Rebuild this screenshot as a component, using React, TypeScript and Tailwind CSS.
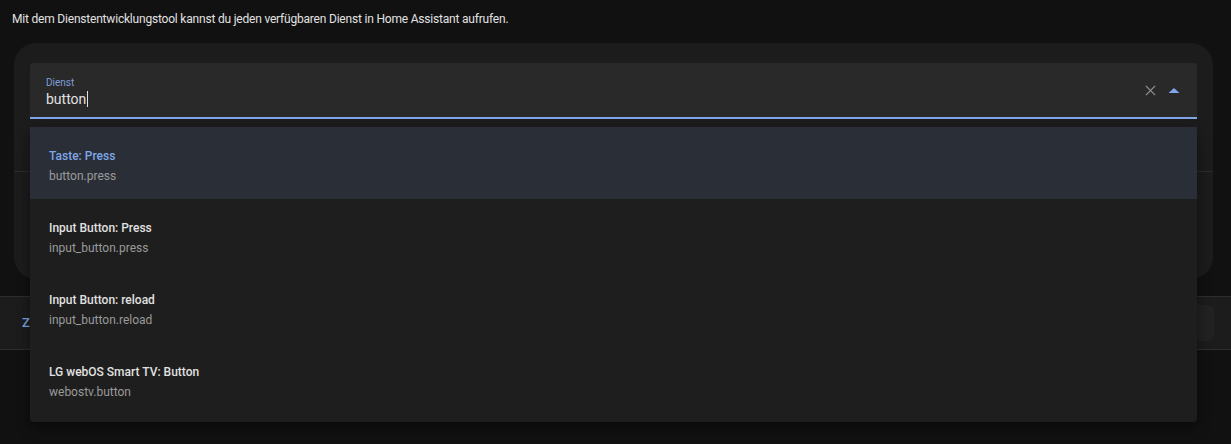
import { X } from "lucide-react";

const items = [
  { title: "Taste: Press", id: "button.press", active: true },
  { title: "Input Button: Press", id: "input_button.press" },
  { title: "Input Button: reload", id: "input_button.reload" },
  { title: "LG webOS Smart TV: Button", id: "webostv.button" },
];

const App = () => {
  return (
    <div
      className="w-[1231px] h-[444px] overflow-hidden bg-[#111111] text-[#e1e1e1]"
      style={{ fontFamily: "Roboto, 'Noto Sans', sans-serif" }}
    >
      <p className="pl-[12px] pt-[11px] h-[43px] text-[12px] leading-[16px] tracking-[-0.2px]">
        Mit dem Dienstentwicklungstool kannst du jeden verfügbaren Dienst in Home Assistant aufrufen.
      </p>

      <div className="ml-[14px] w-[1199px] h-[236px] rounded-[22px] bg-[#1c1c1c] pt-[20px]">
        <div className="relative mx-[16px]">
          <div className="h-[56px] rounded-t-[4px] bg-[#292929] border-b-2 border-[#7ea6e8] flex items-center pl-[16px] pr-[17px]">
            <div className="flex-1 flex flex-col pt-[5px]">
              <span className="text-[10px] leading-[12px] text-[#7c9fdc]">Dienst</span>
              <span className="text-[14px] leading-[20px] text-[#e1e1e1] flex items-center">
                button
                <span className="inline-block w-px h-[16px] bg-[#e1e1e1] ml-px" />
              </span>
            </div>
            <X className="w-[17px] h-[17px] text-[#8e8e8e] mr-[7px] mt-[1px]" strokeWidth={1.6} />
            <svg width="12" height="12" viewBox="0 0 12 12" className="ml-[2px] mt-[1px]">
              <path d="M0.5 8 L6 3 L11.5 8 Z" fill="#7ea6e8" />
            </svg>
          </div>

          <div className="absolute left-0 right-0 top-[64px] z-10 bg-[#1e1e1e] rounded-b-[4px] pb-[7px] shadow-[0_6px_14px_rgba(0,0,0,0.45)]">
            {items.map((it) => (
              <div
                key={it.id}
                className={`h-[72px] pl-[19px] pt-[6px] flex flex-col justify-center gap-[4px] ${it.active ? "bg-[#2a2e37]" : ""}`}
              >
                <span
                  className={`text-[12px] leading-[16px] font-medium ${it.active ? "text-[#7ea6e8]" : "text-[#e1e1e1]"}`}
                >
                  {it.title}
                </span>
                <span className="text-[12px] leading-[16px] text-[#9a9a9a]">{it.id}</span>
              </div>
            ))}
          </div>
        </div>
        <div className="h-[52px]" />
        <div className="border-t border-[#2c2c2c]" />
      </div>

      <div className="mt-[17px] h-[54px] bg-[#1c1c1c] border-y border-[#2e2e2e] flex items-center justify-between pl-[22px] pr-[17px]">
        <span className="text-[13px] font-medium text-[#7ea6e8]">ZURÜCKSETZEN</span>
        <div className="w-[220px] h-[36px] rounded-[6px] bg-[#222222]" />
      </div>
    </div>
  );
};

export default App;
